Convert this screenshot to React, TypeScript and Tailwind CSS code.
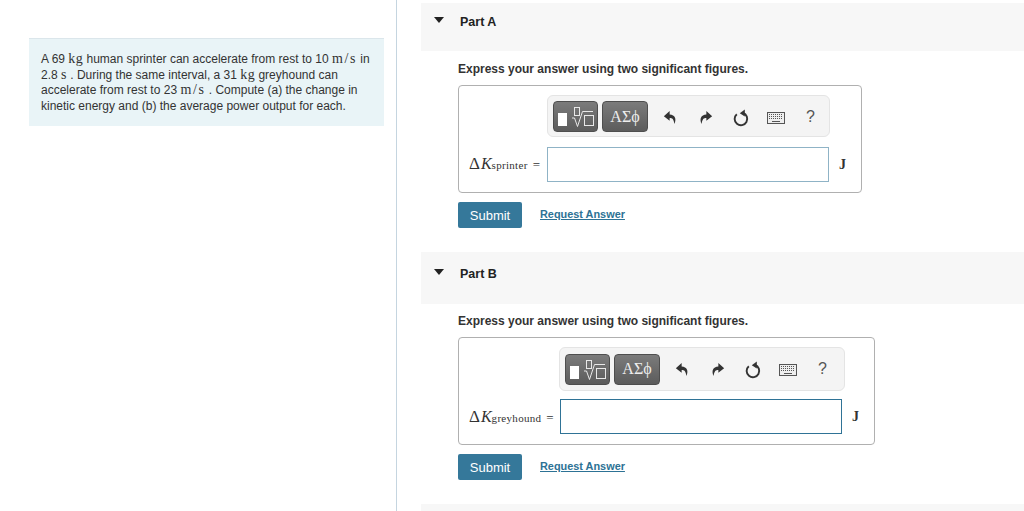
import React from 'react';

const sans = "font-['Liberation_Sans',Arial,sans-serif]";
const serif = "font-['Liberation_Serif','Times_New_Roman',serif]";

const Unit: React.FC<{ children: React.ReactNode; wide?: boolean }> = ({ children, wide }) => (
  <span className={`${serif} inline-block text-[14px] leading-[12px] ${wide ? 'tracking-[1.6px]' : 'tracking-[0.4px]'}`}>{children}</span>
);

const IconCell: React.FC<{ children: React.ReactNode }> = ({ children }) => (
  <div className="flex w-[35px] items-center justify-center">{children}</div>
);

const Toolbar: React.FC<{ isFirst: boolean }> = ({ isFirst }) => (
  <div
    className={`flex items-center rounded-[6px] border border-[#e4e4e4] bg-[#f4f4f4] pl-[5px] ${
      isFirst ? 'h-[42px] w-[283px] pt-[1px]' : 'h-[44px] w-[286px]'
    }`}
  >
    {/* template button */}
    <div className="h-[31px] w-[45px] rounded-[4px] border border-[#4e4e4e] bg-gradient-to-b from-[#7b7b7b] to-[#5c5c5c]">
      <svg width="43" height="29" viewBox="0 0 43 29" fill="none">
        <rect x="4" y="11" width="9" height="13" fill="#fff" />
        <rect x="20.500" y="5.500" width="5" height="8" stroke="#e8e8e8" strokeWidth="1" />
        <path d="M18 16h2.500l3 8.500 5-15h10.500" stroke="#e8e8e8" strokeWidth="1" />
        <rect x="30.500" y="13.500" width="9" height="10" stroke="#e8e8e8" strokeWidth="1" />
      </svg>
    </div>
    {/* symbols button */}
    <div
      className={`${serif} ml-[4px] flex h-[31px] w-[46px] items-center justify-center rounded-[4px] border border-[#4e4e4e] bg-gradient-to-b from-[#7b7b7b] to-[#5c5c5c] text-[16px] text-[#eeeeee]`}
    >
      AΣϕ
    </div>
    <div className={`ml-[5px] flex items-center ${isFirst ? 'mt-[2px]' : 'mt-[1px]'}`}>
      <IconCell>
        <svg width="15" height="15" viewBox="0 0 14 14" fill="#333">
          <path d="M6.200 1L.8 5.800l5.400 4.200V7.400c2.400 0 3.900.9 4.400 5.600 2.200-4.800.7-8.600-4.400-8.900V1z" />
        </svg>
      </IconCell>
      <IconCell>
        <svg width="15" height="15" viewBox="0 0 14 14" fill="#333">
          <path d="M7.800 1l5.400 4.800L7.800 10V7.400c-2.400 0-3.900.9-4.400 5.600-2.200-4.800-.7-8.600 4.400-8.900V1z" />
        </svg>
      </IconCell>
      <IconCell>
        <svg width="18" height="18" viewBox="0 0 18 18" fill="none">
          <path d="M4.800 5.200a6.300 6.300 0 1 0 6.200-1.200" stroke="#333" strokeWidth="1.900" />
          <path d="M12.800.6v7L7.800 4.200z" fill="#333" />
        </svg>
      </IconCell>
      <IconCell>
        <svg width="18" height="12" viewBox="0 0 18 12">
          <rect x="0.500" y="0.500" width="17" height="11" fill="#eeeeee" stroke="#555" />
          <path d="M2 2.500h14M2 4.500h14M2 6.500h14" stroke="#555" strokeWidth="1" strokeDasharray="1 1" />
          <path d="M5 9.500h8" stroke="#555" strokeWidth="1" />
        </svg>
      </IconCell>
      <IconCell>
        <span className={`${sans} mb-[2px] text-[16px] leading-none text-[#555]`}>?</span>
      </IconCell>
    </div>
  </div>
);

const PartSection: React.FC<{ part: string; sub: string; isFirst: boolean }> = ({ part, sub, isFirst }) => (
  <section>
    <div className={`flex bg-[#f7f7f7] pl-[13px] ${isFirst ? 'h-[48px] pt-[12px]' : 'h-[52px] pt-[15px]'}`}>
      <svg width="10" height="6" viewBox="0 0 10 6" className="mt-[2px]" fill="#222">
        <path d="M0 0h10L5 6z" />
      </svg>
      <h2 className="ml-[16px] text-[12.500px] font-bold leading-[14px] text-[#222]">{part}</h2>
    </div>
    <div className="pl-[37px]">
      <p className={`${isFirst ? 'mt-[11px]' : 'mt-[10px]'} text-[12px] font-bold leading-[14px] text-[#333]`}>
        Express your answer using two significant figures.
      </p>
      <div
        className={`mt-[9px] flex h-[108px] flex-col rounded-[4px] border border-[#b0b0b0] pt-[9px] ${
          isFirst ? 'w-[404px] pl-[88px]' : 'w-[417px] pl-[100px]'
        }`}
      >
        <Toolbar isFirst={isFirst} />
        <div className={`relative flex items-center ${isFirst ? 'mt-[10px]' : 'mt-[8px] pl-[1px]'}`}>
          <div
            className={`${serif} absolute whitespace-nowrap text-[16px] leading-[18px] text-[#333] ${
              isFirst ? 'top-[8px] -left-[78px]' : 'top-[9px] -left-[90px]'
            }`}
          >
            <span className="text-[17px] tracking-[1px]">Δ</span>
            <i>K</i>
            <span className="text-[11px] tracking-[0.3px]">{sub}</span>
            <span className="ml-[5px] text-[13px]">=</span>
          </div>
          <div className={`h-[35px] w-[282px] border bg-white ${isFirst ? 'border-[#8fb3c6]' : 'border-[#2f7396]'}`} />
          <span className={`${serif} ml-[10px] text-[14px] font-bold text-[#333]`}>J</span>
        </div>
      </div>
      <div className="mt-[9px] flex items-center">
        <button className="h-[26px] w-[64px] rounded-[2px] bg-[#35789a] pt-[1px] text-[13px] text-white">Submit</button>
        <a className={`${isFirst ? 'mb-[2px]' : 'mb-[1px]'} ml-[18px] text-[10.900px] font-bold text-[#2d7295] underline`}>
          Request Answer
        </a>
      </div>
    </div>
  </section>
);

const App: React.FC = () => {
  return (
    <div className={`${sans} flex h-[511px] w-[1024px] overflow-hidden bg-white`}>
      {/* problem statement column */}
      <div className="h-full w-[397px] shrink-0 border-r border-[#c5d5e0] pl-[29px] pt-[38px]">
        <div className="h-[88px] w-[355px] border-t border-[#dbe6eb] bg-[#e9f4f7] pl-[12px] pr-[10px] pt-[13px] text-[12px] leading-[15.600px] text-[#333]">
          A 69 <Unit>kg</Unit> human sprinter can accelerate from rest to 10 <Unit wide>m/s</Unit> in 2.8 <Unit>s</Unit> . During the same interval, a 31 <Unit>kg</Unit> greyhound can accelerate from rest to 23 <Unit wide>m/s</Unit> . Compute (a) the change in kinetic energy and (b) the average power output for each.
        </div>
      </div>

      {/* parts column */}
      <div className="ml-[24px] flex-1 pt-[3px]">
        <PartSection part="Part A" sub="sprinter" isFirst />
        <div className="mt-[24px]">
          <PartSection part="Part B" sub="greyhound" isFirst={false} />
        </div>
        <div className="mt-[24px] h-[8px] bg-[#f7f7f7]" />
      </div>
    </div>
  );
};

export default App;
